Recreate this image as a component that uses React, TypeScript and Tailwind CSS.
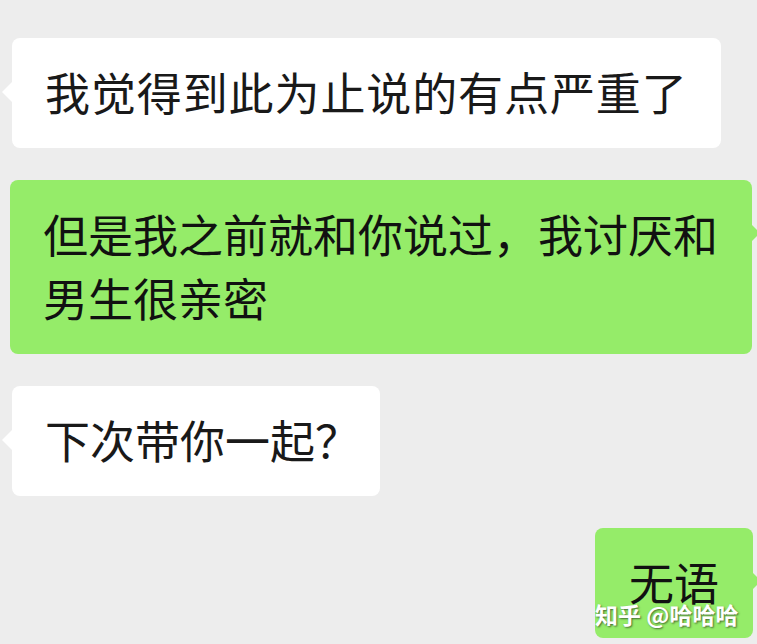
const font = {
  fontFamily: '"Noto Sans CJK SC", "Noto Sans", sans-serif'
};

type Msg = { text: string; mine: boolean; extra?: string };

const messages: Msg[] = [
  { text: '我觉得到此为止说的有点严重了', mine: false, extra: 'tracking-[0.9px]' },
  { text: '但是我之前就和你说过，我讨厌和男生很亲密', mine: true, extra: 'w-[742px] pl-[33px] pr-[20px] mr-[5px]' },
  { text: '下次带你一起？', mine: false },
  { text: '无语', mine: true, extra: 'w-fit px-[34px] mr-[4px]' }
];

function Text({ text }: { text: string }) {
  // the question mark is set half width in the screenshot
  if (text.endsWith('？')) {
    return (
      <>
        {text.slice(0, -1)}
        <span className="tracking-[-13px]">？</span>
      </>
    );
  }
  return <>{text}</>;
}

function Bubble({ msg }: { msg: Msg }) {
  if (!msg.mine) {
    return (
      <div
        className={`relative ml-[12px] w-fit rounded-[8px] bg-white pb-[24px] pl-[33px] pr-[33px] pt-[22px] text-[45px] leading-[64px] text-[#191919] ${msg.extra ?? ''}`}
      >
        <span className="absolute left-[-10px] top-[43px] h-0 w-0 border-y-[11px] border-r-[11px] border-y-transparent border-r-white" />
        <Text text={msg.text} />
      </div>
    );
  }
  return (
    <div
      className={`relative self-end rounded-[8px] bg-[#95ec69] pb-[24px] pt-[22px] text-[45px] leading-[64px] text-[#111] ${msg.extra ?? ''}`}
    >
      <span className="absolute right-[-8px] top-[42px] h-0 w-0 border-y-[11px] border-l-[11px] border-y-transparent border-l-[#95ec69]" />
      <Text text={msg.text} />
    </div>
  );
}

export default function App() {
  return (
    <div
      className="relative h-[644px] w-[757px] overflow-hidden bg-[#ededed]"
      style={font}
    >
      <div className="flex flex-col gap-[32px] pt-[38px]">
        {messages.map((m, i) => (
          <Bubble key={i} msg={m} />
        ))}
      </div>
      <div className="absolute left-[595px] top-[599px] text-[23px] font-bold leading-[30px] text-white [text-shadow:1px_1px_2px_rgba(0,0,0,0.55)]">
        知乎 @哈哈哈
      </div>
    </div>
  );
}
